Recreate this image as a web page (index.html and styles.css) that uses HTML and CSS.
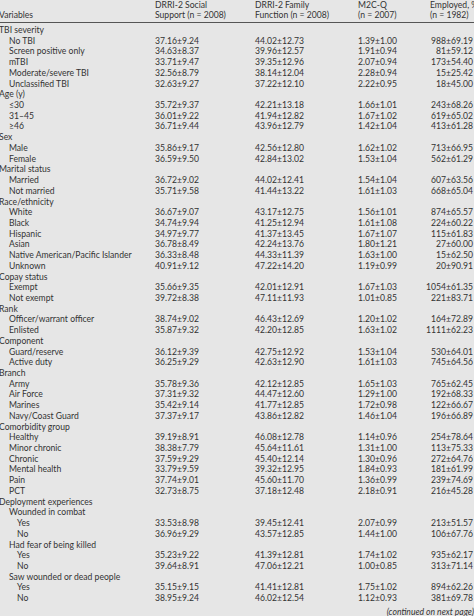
FILE: index.html
```
<!DOCTYPE html>
<html>
<head>
<meta charset="utf-8">
<link rel="stylesheet" href="styles.css">
</head>
<body>
<div class="page">
<table class="tbl">
<colgroup>
<col class="c1"><col class="c2"><col class="c3"><col class="c4"><col class="c5">
</colgroup>
<thead>
<tr><th></th><th>DRRI-2 Social</th><th>DRRI-2 Family</th><th>M2C-Q</th><th class="emp">Employed, %</th></tr>
<tr class="h2"><th>Variables</th><th>Support (n = 2008)</th><th>Function (n = 2008)</th><th>(n = 2007)</th><th class="emp">(n = 1982)</th></tr>
</thead>
<tbody>
<tr class="first"><td>TBI severity</td><td></td><td></td><td></td><td></td></tr>
<tr><td class="i1">No TBI</td><td>37.16±9.24</td><td>44.02±12.73</td><td>1.39±1.00</td><td>988±69.19</td></tr>
<tr><td class="i1">Screen positive only</td><td>34.63±8.37</td><td>39.96±12.57</td><td>1.91±0.94</td><td>81±59.12</td></tr>
<tr><td class="i1">mTBI</td><td>33.71±9.47</td><td>39.35±12.96</td><td>2.07±0.94</td><td>173±54.40</td></tr>
<tr><td class="i1">Moderate/severe TBI</td><td>32.56±8.79</td><td>38.14±12.04</td><td>2.28±0.94</td><td>15±25.42</td></tr>
<tr><td class="i1">Unclassified TBI</td><td>32.63±9.27</td><td>37.22±12.10</td><td>2.22±0.95</td><td>18±45.00</td></tr>
<tr><td>Age (y)</td><td></td><td></td><td></td><td></td></tr>
<tr><td class="i1">≤30</td><td>35.72±9.37</td><td>42.21±13.18</td><td>1.66±1.01</td><td>243±68.26</td></tr>
<tr><td class="i1">31–45</td><td>36.01±9.22</td><td>41.94±12.82</td><td>1.67±1.02</td><td>619±65.02</td></tr>
<tr><td class="i1">≥46</td><td>36.71±9.44</td><td>43.96±12.79</td><td>1.42±1.04</td><td>413±61.28</td></tr>
<tr><td>Sex</td><td></td><td></td><td></td><td></td></tr>
<tr><td class="i1">Male</td><td>35.86±9.17</td><td>42.56±12.80</td><td>1.62±1.02</td><td>713±66.95</td></tr>
<tr><td class="i1">Female</td><td>36.59±9.50</td><td>42.84±13.02</td><td>1.53±1.04</td><td>562±61.29</td></tr>
<tr><td>Marital status</td><td></td><td></td><td></td><td></td></tr>
<tr><td class="i1">Married</td><td>36.72±9.02</td><td>44.02±12.41</td><td>1.54±1.04</td><td>607±63.56</td></tr>
<tr><td class="i1">Not married</td><td>35.71±9.58</td><td>41.44±13.22</td><td>1.61±1.03</td><td>668±65.04</td></tr>
<tr><td>Race/ethnicity</td><td></td><td></td><td></td><td></td></tr>
<tr><td class="i1">White</td><td>36.67±9.07</td><td>43.17±12.75</td><td>1.56±1.01</td><td>874±65.57</td></tr>
<tr><td class="i1">Black</td><td>34.74±9.94</td><td>41.25±12.94</td><td>1.61±1.08</td><td>224±60.22</td></tr>
<tr><td class="i1">Hispanic</td><td>34.97±9.77</td><td>41.37±13.45</td><td>1.67±1.07</td><td>115±61.83</td></tr>
<tr><td class="i1">Asian</td><td>36.78±8.49</td><td>42.24±13.76</td><td>1.80±1.21</td><td>27±60.00</td></tr>
<tr><td class="i1">Native American/Pacific Islander</td><td>36.33±8.48</td><td>44.33±11.39</td><td>1.63±1.00</td><td>15±62.50</td></tr>
<tr><td class="i1">Unknown</td><td>40.91±9.12</td><td>47.22±14.20</td><td>1.19±0.99</td><td>20±90.91</td></tr>
<tr><td>Copay status</td><td></td><td></td><td></td><td></td></tr>
<tr><td class="i1">Exempt</td><td>35.66±9.35</td><td>42.01±12.91</td><td>1.67±1.03</td><td>1054±61.35</td></tr>
<tr><td class="i1">Not exempt</td><td>39.72±8.38</td><td>47.11±11.93</td><td>1.01±0.85</td><td>221±83.71</td></tr>
<tr><td>Rank</td><td></td><td></td><td></td><td></td></tr>
<tr><td class="i1">Officer/warrant officer</td><td>38.74±9.02</td><td>46.43±12.69</td><td>1.20±1.02</td><td>164±72.89</td></tr>
<tr><td class="i1">Enlisted</td><td>35.87±9.32</td><td>42.20±12.85</td><td>1.63±1.02</td><td>1111±62.23</td></tr>
<tr><td>Component</td><td></td><td></td><td></td><td></td></tr>
<tr><td class="i1">Guard/reserve</td><td>36.12±9.39</td><td>42.75±12.92</td><td>1.53±1.04</td><td>530±64.01</td></tr>
<tr><td class="i1">Active duty</td><td>36.25±9.29</td><td>42.63±12.90</td><td>1.61±1.03</td><td>745±64.56</td></tr>
<tr><td>Branch</td><td></td><td></td><td></td><td></td></tr>
<tr><td class="i1">Army</td><td>35.78±9.36</td><td>42.12±12.85</td><td>1.65±1.03</td><td>765±62.45</td></tr>
<tr><td class="i1">Air Force</td><td>37.31±9.32</td><td>44.47±12.60</td><td>1.29±1.00</td><td>192±68.33</td></tr>
<tr><td class="i1">Marines</td><td>35.42±9.14</td><td>41.77±12.85</td><td>1.72±0.98</td><td>122±66.67</td></tr>
<tr><td class="i1">Navy/Coast Guard</td><td>37.37±9.17</td><td>43.86±12.82</td><td>1.46±1.04</td><td>196±66.89</td></tr>
<tr><td>Comorbidity group</td><td></td><td></td><td></td><td></td></tr>
<tr><td class="i1">Healthy</td><td>39.19±8.91</td><td>46.08±12.78</td><td>1.14±0.96</td><td>254±78.64</td></tr>
<tr><td class="i1">Minor chronic</td><td>38.38±7.79</td><td>45.64±11.61</td><td>1.31±1.00</td><td>113±75.33</td></tr>
<tr><td class="i1">Chronic</td><td>37.59±9.29</td><td>45.40±12.14</td><td>1.30±0.96</td><td>272±64.76</td></tr>
<tr><td class="i1">Mental health</td><td>33.79±9.59</td><td>39.32±12.95</td><td>1.84±0.93</td><td>181±61.99</td></tr>
<tr><td class="i1">Pain</td><td>37.74±9.01</td><td>45.60±11.70</td><td>1.36±0.99</td><td>239±74.69</td></tr>
<tr><td class="i1">PCT</td><td>32.73±8.75</td><td>37.18±12.48</td><td>2.18±0.91</td><td>216±45.28</td></tr>
<tr><td>Deployment experiences</td><td></td><td></td><td></td><td></td></tr>
<tr><td class="i1">Wounded in combat</td><td></td><td></td><td></td><td></td></tr>
<tr><td class="i2">Yes</td><td>33.53±8.98</td><td>39.45±12.41</td><td>2.07±0.99</td><td>213±51.57</td></tr>
<tr><td class="i2">No</td><td>36.96±9.29</td><td>43.57±12.85</td><td>1.44±1.00</td><td>106±67.76</td></tr>
<tr><td class="i1">Had fear of being killed</td><td></td><td></td><td></td><td></td></tr>
<tr><td class="i2">Yes</td><td>35.23±9.22</td><td>41.39±12.81</td><td>1.74±1.02</td><td>935±62.17</td></tr>
<tr><td class="i2">No</td><td>39.64±8.91</td><td>47.06±12.21</td><td>1.00±0.85</td><td>313±71.14</td></tr>
<tr><td class="i1">Saw wounded or dead people</td><td></td><td></td><td></td><td></td></tr>
<tr><td class="i2">Yes</td><td>35.15±9.15</td><td>41.41±12.81</td><td>1.75±1.02</td><td>894±62.26</td></tr>
<tr><td class="i2">No</td><td>38.95±9.24</td><td>46.02±12.54</td><td>1.12±0.93</td><td>381±69.78</td></tr>
</tbody>
</table>
<p class="cont">(continued on next page)</p>
</div>
</body>
</html>
```
FILE: styles.css
```
html, body {
  margin: 0;
  padding: 0;
  background: #e6e6e6;
  overflow: hidden;
}
.page {
  width: 478px;
  margin-left: -1px;
  font-family: Lato, "Liberation Sans", sans-serif;
  font-size: 8.6px;
  color: #333333;
}
.tbl {
  border-collapse: collapse;
  table-layout: fixed;
  width: 478px;
}
.c1 { width: 156px; }
.c2 { width: 100px; }
.c3 { width: 103px; }
.c4 { width: 62px; }
.c5 { width: 57px; }
th {
  font-weight: normal;
  text-align: left;
  padding: 0;
  line-height: 10px;
  white-space: nowrap;
}
thead tr.h2 th {
  border-bottom: 1px solid #555555;
  padding-bottom: 2px;
}
th.emp { padding-left: 10px; }
td {
  padding: 0;
  line-height: 10.72px;
  height: 10.72px;
  white-space: nowrap;
}
tbody tr.first td { padding-top: 2px; }
td:last-child { text-align: right; padding-right: 4px; }
td.i1 { padding-left: 10px; }
td.i2 { padding-left: 18px; }
.cont {
  margin: 3px 3px 0 0;
  text-align: right;
  font-style: italic;
  line-height: 10px;
}
```
